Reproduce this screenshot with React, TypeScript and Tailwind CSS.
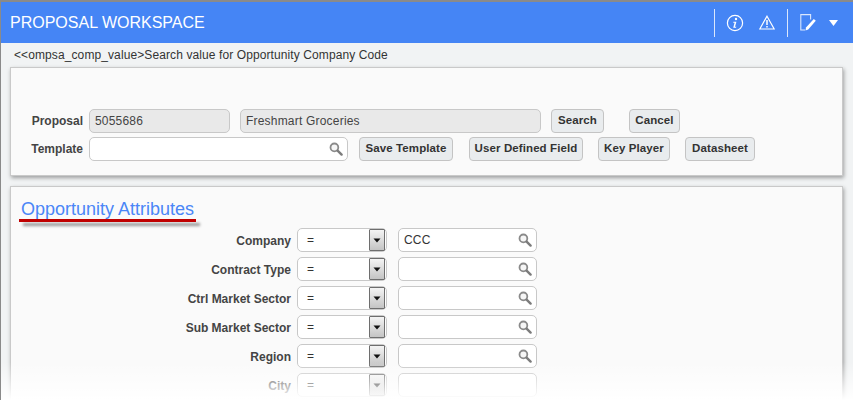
const FONT = "font-['Liberation_Sans',Arial,sans-serif]";

function MagnifierIcon() {
  return (
    <svg width="14" height="14" viewBox="0 0 14 14" fill="none" className="shrink-0">
      <circle cx="5.4" cy="5.4" r="3.9" stroke="#8a8a8a" strokeWidth="1.8" fill="#f6f6f6" />
      <path d="M8.6 8.6 L12.6 12.6" stroke="#7c7c7c" strokeWidth="2.4" strokeLinecap="round" />
    </svg>
  );
}

function Btn({ label, className = '' }: { label: string; className?: string }) {
  return (
    <button className={`h-6 shrink-0 rounded-[4px] border border-[#c4c4c4] bg-[#e9ecee] text-[11.5px] font-bold tracking-[0.1px] text-[#333] ${className}`}>
      {label}
    </button>
  );
}

function LookupInput({ value = '', className = '', icon = true }: { value?: string; className?: string; icon?: boolean }) {
  return (
    <div className={`flex h-6 items-center justify-between rounded-[5px] border border-[#c8c8c8] bg-white pl-[5px] pr-[4px] text-[12px] text-[#333] ${className}`}>
      <span className="tracking-[0.2px]">{value}</span>
      {icon && <MagnifierIcon />}
    </div>
  );
}

function OpSelect() {
  return (
    <div className="flex h-6 w-[90px] items-center justify-between rounded-[5px] border border-[#c8c8c8] bg-white text-[12px] text-[#333]">
      <span className="pl-[9px]">=</span>
      <div className="mr-[1px] flex h-[22px] w-4 items-center justify-center rounded-[1px] border border-[#6e6e6e] bg-gradient-to-b from-[#f4f4f4] to-[#c4c4c4]">
        <svg width="8" height="5" viewBox="0 0 8 5"><path d="M0.5 0.5 H7.5 L4 4.5 Z" fill="#111" /></svg>
      </div>
    </div>
  );
}

const ROWS = [
  { label: 'Company', value: 'CCC' },
  { label: 'Contract Type', value: '' },
  { label: 'Ctrl Market Sector', value: '' },
  { label: 'Sub Market Sector', value: '' },
  { label: 'Region', value: '' },
  { label: 'City', value: '' },
];

export default function App() {
  return (
    <div className={`relative h-[400px] w-[853px] overflow-hidden border-l border-t-2 border-[#8a8a8a] bg-[#f1f3f4] ${FONT}`}>
      {/* Title bar */}
      <div className="flex h-[41px] items-center justify-between bg-[#4585f5] pl-[9px] text-white">
        <span className="text-[16px] leading-none">PROPOSAL WORKSPACE</span>
        <div className="flex items-center">
          <div className="h-7 w-px bg-[#dbe7fc]" />
          <svg width="18" height="18" viewBox="0 0 18 18" fill="none" className="ml-[11px]">
            <circle cx="9" cy="9" r="7.6" stroke="white" strokeWidth="1.2" />
            <circle cx="10" cy="5" r="1.2" fill="white" />
            <path d="M7.4 7.8 H10.4 L9 12.8 H10.4 L10 13.8 H7.2 L8.6 8.8 H7.2 Z" fill="white" />
          </svg>
          <svg width="16" height="15" viewBox="0 0 16 15" fill="none" className="ml-[15px]">
            <path d="M8 1.2 L15.2 14 H0.8 Z" stroke="white" strokeWidth="1.2" />
            <path d="M8 5 V10" stroke="white" strokeWidth="1.5" />
            <path d="M8 11 V12.6" stroke="white" strokeWidth="1.5" />
          </svg>
          <div className="ml-3 h-7 w-px bg-[#dbe7fc]" />
          <svg width="16" height="17" viewBox="0 0 16 17" fill="none" className="ml-3">
            <path d="M5 16 H0.8 V0.6 H10.6 V5.5" stroke="white" strokeWidth="1.1" opacity="0.8" />
            <path d="M5.5 16.5 L6 13.6 L13.8 5 L15.8 6.8 L8.2 15.6 Z" fill="white" />
          </svg>
          <svg width="9" height="6" viewBox="0 0 9 6" className="ml-[13px] mr-[15px]"><path d="M0 0 H9 L4.5 6 Z" fill="white" /></svg>
        </div>
      </div>

      {/* Message line */}
      <div className="flex h-6 items-center pl-[13px] text-[12px] tracking-[0.1px] text-[#333]">
        &lt;&lt;ompsa_comp_value&gt;Search value for Opportunity Company Code
      </div>

      {/* Proposal panel */}
      <div className="ml-[9px] mr-[10px] flex h-[109px] flex-col gap-1 border border-[#c9c9c9] bg-[#fafafa] pt-[41px] shadow-[1px_2px_4px_rgba(0,0,0,0.35)]">
        <div className="flex items-center">
          <span className="w-[72px] text-right text-[12px] font-bold text-[#444]">Proposal</span>
          <div className="ml-[6px] flex h-6 w-[141px] items-center rounded-[5px] border border-[#c8c8c8] bg-[#e9e9e9] pl-[5px] text-[12px] tracking-[0.2px] text-[#444]">5055686</div>
          <div className="ml-[10px] flex h-6 w-[301px] items-center rounded-[5px] border border-[#c8c8c8] bg-[#e9e9e9] pl-[5px] text-[12px] tracking-[0.2px] text-[#444]">Freshmart Groceries</div>
          <Btn label="Search" className="ml-[10px] w-[53px]" />
          <Btn label="Cancel" className="ml-[25px] w-[51px]" />
        </div>
        <div className="flex items-center">
          <span className="w-[72px] text-right text-[12px] font-bold text-[#444]">Template</span>
          <LookupInput className="ml-[6px] w-[259px]" />
          <Btn label="Save Template" className="ml-[11px] w-[94px]" />
          <Btn label="User Defined Field" className="ml-[16px] w-[114px]" />
          <Btn label="Key Player" className="ml-[15px] w-[72px]" />
          <Btn label="Datasheet" className="ml-[15px] w-[70px]" />
        </div>
      </div>

      {/* Opportunity panel */}
      <div className="ml-[9px] mr-[10px] mt-[10px] h-[300px] border border-[#c9c9c9] bg-[#fafafa] pt-[13px] shadow-[1px_2px_4px_rgba(0,0,0,0.35)]">
        <div className="ml-[8px] w-fit">
          <div className="px-[2px] text-[18px] leading-[19px] text-[#4a86f7]">Opportunity Attributes</div>
          <div className="h-[3px] bg-[#c00000] shadow-[4px_4px_3px_rgba(0,0,0,0.4)]" />
        </div>
        <div className="mt-[6px] flex flex-col gap-[5px]">
          {ROWS.map(r => (
            <div key={r.label} className="flex items-center">
              <span className="w-[280px] pt-[1px] text-right text-[12px] font-bold text-[#444]">{r.label}</span>
              <div className="ml-[6px]"><OpSelect /></div>
              <LookupInput value={r.value} className="ml-[11px] w-[139px]" icon={r.label !== 'City'} />
            </div>
          ))}
        </div>
      </div>

      {/* bottom fade over the cropped panel */}
      <div className="pointer-events-none absolute inset-x-0 bottom-0 h-[38px] bg-gradient-to-b from-white/0 to-white" />
    </div>
  );
}
